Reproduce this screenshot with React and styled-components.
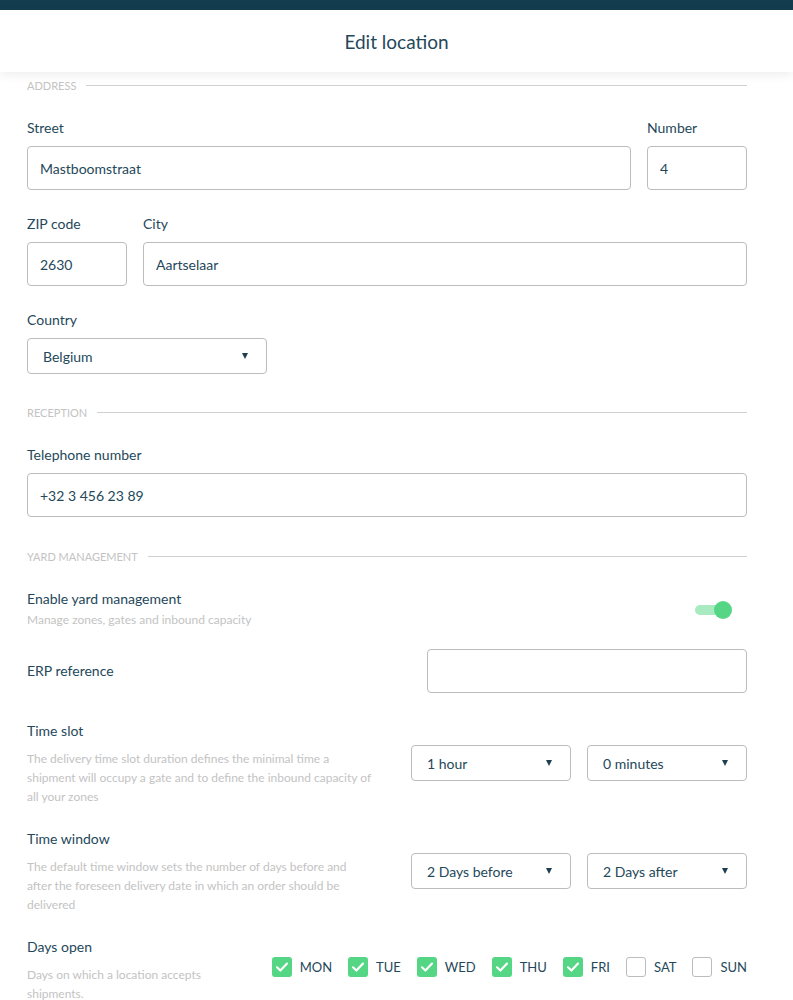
import React from "react";
import styled, { createGlobalStyle } from "styled-components";

const GlobalStyle = createGlobalStyle`
  body {
    margin: 0;
    background: #ffffff;
    font-family: Lato, "Open Sans", sans-serif;
    color: #24485a;
  }
`;

const TopBar = styled.div`
  height: 10px;
  background: #133d4e;
`;

const Header = styled.header`
  height: 62px;
  display: flex;
  align-items: center;
  justify-content: center;
  background: #fff;
  box-shadow: 0 3px 10px rgba(0, 0, 0, 0.07);
  position: relative;
  z-index: 1;
`;

const Title = styled.h1`
  margin: 0;
  font-size: 19px;
  font-weight: 400;
  color: #24485a;
`;

const Content = styled.main`
  width: 720px;
  margin-left: 27px;
  padding-top: 6px;
  display: flex;
  flex-direction: column;
`;

const SectionTitle = styled.div`
  display: flex;
  align-items: center;
  gap: 10px;
  height: 14px;
  font-size: 11px;
  text-transform: uppercase;
  color: #c3c3c3;
  margin-top: ${(p) => p.$mt || "31px"};
  margin-bottom: 26px;

  &::after {
    content: "";
    flex: 1;
    height: 1px;
    background: #d0d0d0;
  }
`;

const Row = styled.div`
  display: flex;
  gap: 16px;
  margin-bottom: ${(p) => p.$mb || "24px"};
`;

const Field = styled.div`
  display: flex;
  flex-direction: column;
  width: ${(p) => p.$width || "auto"};
  flex: ${(p) => (p.$grow ? 1 : "none")};
`;

const Label = styled.label`
  font-size: 14px;
  line-height: 20px;
  color: #24485a;
  margin-bottom: 8px;
`;

const Input = styled.div`
  box-sizing: border-box;
  height: 44px;
  border: 1px solid #bcbcbc;
  border-radius: 4px;
  padding: 0 12px;
  display: flex;
  align-items: center;
  font-size: 14px;
  color: #24485a;
  width: ${(p) => p.$width || "auto"};
`;

const Select = styled.div`
  box-sizing: border-box;
  height: 36px;
  width: ${(p) => p.$width || "160px"};
  border: 1px solid #bcbcbc;
  border-radius: 4px;
  padding: 0 18px 0 15px;
  display: flex;
  align-items: center;
  justify-content: space-between;
  font-size: 14px;
  color: #24485a;
`;

const Caret = styled.span`
  width: 0;
  height: 0;
  border-left: 3px solid transparent;
  border-right: 3px solid transparent;
  border-top: 6px solid #1d3f4f;
`;

const SettingRow = styled.div`
  display: flex;
  justify-content: space-between;
  align-items: ${(p) => p.$align || "flex-start"};
  margin-bottom: ${(p) => p.$mb || "23px"};
`;

const SettingText = styled.div`
  display: flex;
  flex-direction: column;
  width: ${(p) => p.$width || "345px"};
`;

const SettingLabel = styled.div`
  font-size: 14px;
  line-height: 20px;
  color: #24485a;
`;

const SubLabel = styled.div`
  margin-top: 1px;
  font-size: 12px;
  line-height: 19px;
  color: #c3c3c3;
`;

const Description = styled.p`
  margin: 8px 0 0;
  font-size: 12px;
  line-height: 19px;
  color: #c3c3c3;
`;

const Controls = styled.div`
  display: flex;
  gap: 16px;
  margin-top: 24px;
`;

const Toggle = styled.div`
  position: relative;
  width: 37px;
  height: 20px;
  margin-right: 15px;
  margin-top: 11px;

  &::before {
    content: "";
    position: absolute;
    left: 0;
    top: 5px;
    width: 30px;
    height: 10px;
    border-radius: 5px;
    background: #a9ebc0;
  }

  &::after {
    content: "";
    position: absolute;
    right: 0;
    top: 1px;
    width: 18px;
    height: 18px;
    border-radius: 50%;
    background: #55d685;
  }
`;

const Days = styled.div`
  display: flex;
  align-items: center;
  gap: 16px;
  margin-top: 20px;
`;

const Day = styled.div`
  display: flex;
  align-items: center;
  gap: 8px;
  font-size: 13px;
  color: #24485a;
`;

const Box = styled.span`
  box-sizing: border-box;
  width: 20px;
  height: 20px;
  border-radius: 3px;
  display: flex;
  align-items: center;
  justify-content: center;
  background: ${(p) => (p.$checked ? "#55d685" : "#fff")};
  border: ${(p) => (p.$checked ? "none" : "1px solid #bcbcbc")};
`;

const CheckBox = ({ checked }) => (
  <Box $checked={checked}>
    {checked && (
      <svg width="16" height="16" viewBox="0 0 16 16">
        <path
          d="M3 8.3 L6.4 11.5 L13 4.6"
          fill="none"
          stroke="#fff"
          strokeWidth="2.2"
          strokeLinecap="round"
          strokeLinejoin="round"
        />
      </svg>
    )}
  </Box>
);

const SelectBox = ({ value, width }) => (
  <Select $width={width}>
    <span>{value}</span>
    <Caret />
  </Select>
);

const days = [
  ["MON", true],
  ["TUE", true],
  ["WED", true],
  ["THU", true],
  ["FRI", true],
  ["SAT", false],
  ["SUN", false],
];

export default function App() {
  return (
    <>
      <GlobalStyle />
      <TopBar />
      <Header>
        <Title>Edit location</Title>
      </Header>
      <Content>
        <SectionTitle $mt="0">Address</SectionTitle>
        <Row>
          <Field $grow>
            <Label>Street</Label>
            <Input>Mastboomstraat</Input>
          </Field>
          <Field $width="100px">
            <Label>Number</Label>
            <Input>4</Input>
          </Field>
        </Row>
        <Row>
          <Field $width="100px">
            <Label>ZIP code</Label>
            <Input>2630</Input>
          </Field>
          <Field $grow>
            <Label>City</Label>
            <Input>Aartselaar</Input>
          </Field>
        </Row>
        <Row $mb="0">
          <Field>
            <Label>Country</Label>
            <SelectBox value="Belgium" width="240px" />
          </Field>
        </Row>

        <SectionTitle>Reception</SectionTitle>
        <Row $mb="0">
          <Field $grow>
            <Label>Telephone number</Label>
            <Input>+32 3 456 23 89</Input>
          </Field>
        </Row>

        <SectionTitle $mt="32px">Yard management</SectionTitle>
        <SettingRow $mb="20px">
          <SettingText>
            <SettingLabel>Enable yard management</SettingLabel>
            <SubLabel>Manage zones, gates and inbound capacity</SubLabel>
          </SettingText>
          <Toggle />
        </SettingRow>

        <SettingRow $align="center" $mb="28px">
          <SettingText>
            <SettingLabel>ERP reference</SettingLabel>
          </SettingText>
          <Input $width="320px" />
        </SettingRow>

        <SettingRow>
          <SettingText>
            <SettingLabel>Time slot</SettingLabel>
            <Description>
              The delivery time slot duration defines the minimal time a
              shipment will occupy a gate and to define the inbound capacity
              of all your zones
            </Description>
          </SettingText>
          <Controls>
            <SelectBox value="1 hour" />
            <SelectBox value="0 minutes" />
          </Controls>
        </SettingRow>

        <SettingRow>
          <SettingText>
            <SettingLabel>Time window</SettingLabel>
            <Description>
              The default time window sets the number of days before and after
              the foreseen delivery date in which an order should be delivered
            </Description>
          </SettingText>
          <Controls>
            <SelectBox value="2 Days before" />
            <SelectBox value="2 Days after" />
          </Controls>
        </SettingRow>

        <SettingRow>
          <SettingText $width="215px">
            <SettingLabel>Days open</SettingLabel>
            <Description>Days on which a location accepts shipments.</Description>
          </SettingText>
          <Days>
            {days.map(([d, on]) => (
              <Day key={d}>
                <CheckBox checked={on} />
                {d}
              </Day>
            ))}
          </Days>
        </SettingRow>
      </Content>
    </>
  );
}
